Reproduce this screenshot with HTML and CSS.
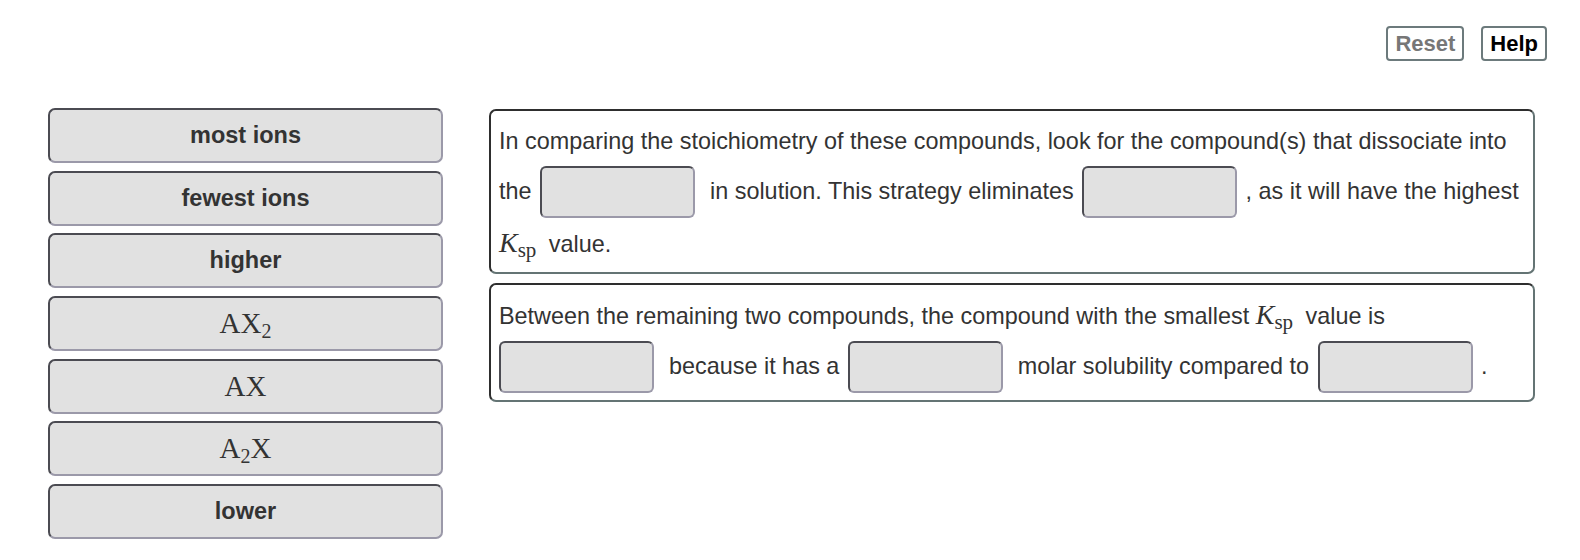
FILE: index.html
```html
<!DOCTYPE html>
<html>
<head>
<meta charset="utf-8" />
<meta name="viewport" content="width=device-width, initial-scale=1.0">
<link rel="stylesheet" href="styles.css">
</head>
<body>
<div class="toolbar">
  <a href="#" class="btn btn-reset" role="button">Reset</a>
  <a href="#" class="btn btn-help" role="button">Help</a>
</div>
<main class="workspace">
  <div class="bank">
    <div class="tile"><span>most ions</span></div>
    <div class="tile"><span>fewest ions</span></div>
    <div class="tile"><span>higher</span></div>
    <div class="tile tile-math"><span>AX<sub>2</sub></span></div>
    <div class="tile tile-math"><span>AX</span></div>
    <div class="tile tile-math"><span>A<sub>2</sub>X</span></div>
    <div class="tile"><span>lower</span></div>
  </div>
  <div class="prompts">
    <div class="prompt">
      In comparing the stoichiometry of these compounds, look for the compound(s) that dissociate into<br>
      the <span class="zone"></span> &nbsp;in solution. This strategy eliminates <span class="zone"></span> , as it will have the highest<br>
      <span class="ksp">K<sub>sp</sub></span> value.
    </div>
    <div class="prompt prompt-last">
      Between the remaining two compounds, the compound with the smallest <span class="ksp">K<sub>sp</sub></span> value is<br>
      <span class="zone zone-first"></span> &nbsp;because it has a <span class="zone"></span> &nbsp;molar solubility compared to <span class="zone"></span> .
    </div>
  </div>
</main>
</body>
</html>
```

FILE: styles.css
```css
:root {--text-color: #333; --tile-bg: #e1e1e1; --tile-dark: #4b4b52; --tile-light: #9b99a9; --box-dark: #2e2e2e; --box-light: #647474;}
body {margin: 0; font-family: 'Liberation Sans', Arial, Helvetica, sans-serif; color: var(--text-color); background: #fff;}
a {text-decoration: none;}
.toolbar {display: flex; justify-content: flex-end; gap: 17px; padding: 26px 33px 0 0;}
.btn {display: block; height: 35px; box-sizing: border-box; line-height: 31px; padding: 0 7px; font-size: 22px; font-weight: bold; border: 2px solid #6c7a7c; border-radius: 4px; background: #fff;}
.btn-reset {color: #777;}
.btn-help {color: #000;}
.workspace {display: flex; align-items: flex-start; gap: 46px; padding: 48px 45px 0 48px;}
.bank {width: 395px; flex: none; display: flex; flex-direction: column; gap: 7.7px; margin-top: -1px;}
.tile {height: 55px; box-sizing: border-box; display: flex; align-items: center; justify-content: center; background: var(--tile-bg); border: 2px solid; border-color: var(--tile-dark) var(--tile-light) var(--tile-light) var(--tile-dark); border-radius: 7px; font-size: 23.5px; font-weight: bold;}
.tile-math {font-family: 'Liberation Serif', 'Times New Roman', serif; font-weight: normal; font-size: 29px;}
.tile-math sub {font-size: 20px; vertical-align: -5px; line-height: 0;}
.prompts {flex: 1; display: flex; flex-direction: column; gap: 9px;}
.prompt {border: 2px solid; border-color: var(--box-dark) var(--box-light) var(--box-light) var(--box-dark); border-radius: 7px; padding: 5px 8px 3px; font-size: 23.4px; line-height: 50px; white-space: nowrap;}
.prompt-last {padding-bottom: 7px;}
.zone {display: inline-block; vertical-align: top; width: 155px; height: 52px; box-sizing: border-box; margin: 0 2px; background: var(--tile-bg); border: 2px solid; border-color: var(--tile-dark) var(--tile-light) var(--tile-light) var(--tile-dark); border-radius: 6px;}
.zone-first {margin-left: 0;}
.ksp {font-family: 'Liberation Serif', 'Times New Roman', serif; font-style: italic; font-size: 28px; margin-right: 6px;}
.ksp sub {font-style: normal; font-size: 21px; vertical-align: -5px; line-height: 0;}
```
